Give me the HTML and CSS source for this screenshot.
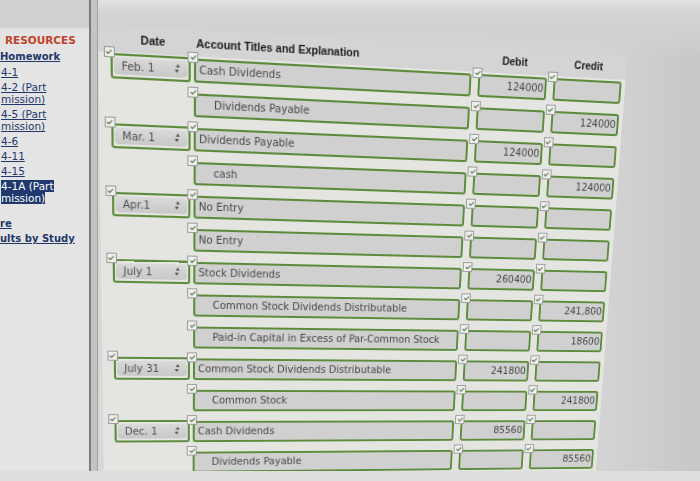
FILE: index.html
```html
<!DOCTYPE html>
<html>
<head>
    <meta charset="UTF-8">
    <meta name="viewport" content="width=device-width, initial-scale=1.0">
    <title>Journal Entries</title>
    <link rel="stylesheet" href="styles.css">
</head>
<body>
    <div class="screen">
        <aside class="sidebar">
            <div class="res-title">RESOURCES</div>
            <a class="hw" href="#">Homework</a>
            <a href="#">4-1</a>
            <a href="#">4-2 (Part<br>mission)</a>
            <a href="#">4-5 (Part<br>mission)</a>
            <a href="#">4-6</a>
            <a href="#">4-11</a>
            <a href="#">4-15</a>
            <a class="current" href="#"><span>4-1A (Part<br>mission)</span></a>
            <a class="hw more" href="#">re</a>
            <a class="hw" href="#">ults by Study</a>
        </aside>
        <div class="divider"></div>

        <main class="sheet">
            <div class="page">
                <div class="head">
                    <div class="h-date">Date</div>
                    <div class="h-acct">Account Titles and Explanation</div>
                    <div class="h-num">Debit</div>
                    <div class="h-num">Credit</div>
                </div>

                <div class="rows">
                    <div class="row">
                        <div class="date"><span class="chk"></span><div class="select">Feb. 1<span class="arr"></span></div></div>
                        <div class="cell"><span class="chk"></span>Cash Dividends</div>
                        <div class="cell num"><span class="chk"></span>124000</div>
                        <div class="cell num"><span class="chk"></span></div>
                    </div>
                    <div class="row">
                        <div></div>
                        <div class="cell indent"><span class="chk"></span>Dividends Payable</div>
                        <div class="cell num"><span class="chk"></span></div>
                        <div class="cell num"><span class="chk"></span>124000</div>
                    </div>
                    <div class="row">
                        <div class="date"><span class="chk"></span><div class="select">Mar. 1<span class="arr"></span></div></div>
                        <div class="cell"><span class="chk"></span>Dividends Payable</div>
                        <div class="cell num"><span class="chk"></span>124000</div>
                        <div class="cell num"><span class="chk"></span></div>
                    </div>
                    <div class="row">
                        <div></div>
                        <div class="cell indent"><span class="chk"></span>cash</div>
                        <div class="cell num"><span class="chk"></span></div>
                        <div class="cell num"><span class="chk"></span>124000</div>
                    </div>
                    <div class="row">
                        <div class="date"><span class="chk"></span><div class="select">Apr.1<span class="arr"></span></div></div>
                        <div class="cell"><span class="chk"></span>No Entry</div>
                        <div class="cell num"><span class="chk"></span></div>
                        <div class="cell num"><span class="chk"></span></div>
                    </div>
                    <div class="row">
                        <div></div>
                        <div class="cell"><span class="chk"></span>No Entry</div>
                        <div class="cell num"><span class="chk"></span></div>
                        <div class="cell num"><span class="chk"></span></div>
                    </div>
                    <div class="row">
                        <div class="date"><span class="chk"></span><div class="select">July 1<span class="arr"></span></div></div>
                        <div class="cell"><span class="chk"></span>Stock Dividends</div>
                        <div class="cell num"><span class="chk"></span>260400</div>
                        <div class="cell num"><span class="chk"></span></div>
                    </div>
                    <div class="row">
                        <div></div>
                        <div class="cell indent"><span class="chk"></span>Common Stock Dividends Distributable</div>
                        <div class="cell num"><span class="chk"></span></div>
                        <div class="cell num"><span class="chk"></span>241,800</div>
                    </div>
                    <div class="row">
                        <div></div>
                        <div class="cell indent"><span class="chk"></span>Paid-in Capital in Excess of Par-Common Stock</div>
                        <div class="cell num"><span class="chk"></span></div>
                        <div class="cell num"><span class="chk"></span>18600</div>
                    </div>
                    <div class="row">
                        <div class="date"><span class="chk"></span><div class="select">July 31<span class="arr"></span></div></div>
                        <div class="cell"><span class="chk"></span>Common Stock Dividends Distributable</div>
                        <div class="cell num"><span class="chk"></span>241800</div>
                        <div class="cell num"><span class="chk"></span></div>
                    </div>
                    <div class="row">
                        <div></div>
                        <div class="cell indent"><span class="chk"></span>Common Stock</div>
                        <div class="cell num"><span class="chk"></span></div>
                        <div class="cell num"><span class="chk"></span>241800</div>
                    </div>
                    <div class="row">
                        <div class="date"><span class="chk"></span><div class="select">Dec. 1<span class="arr"></span></div></div>
                        <div class="cell"><span class="chk"></span>Cash Dividends</div>
                        <div class="cell num"><span class="chk"></span>85560</div>
                        <div class="cell num"><span class="chk"></span></div>
                    </div>
                    <div class="row">
                        <div></div>
                        <div class="cell indent"><span class="chk"></span>Dividends Payable</div>
                        <div class="cell num"><span class="chk"></span></div>
                        <div class="cell num"><span class="chk"></span>85560</div>
                    </div>
                </div>
            </div>
        </main>
    </div>
</body>
</html>
```

FILE: styles.css
```css
body {
    margin: 0;
    background: #dedede;
    font-family: "DejaVu Sans", Verdana, sans-serif;
    overflow: hidden;
}
.screen {
    display: flex;
    height: 471px;
    overflow: hidden;
    background: linear-gradient(to bottom, #e2e2e2 0, #d3d3d3 12px, #d1d1d1 30px, transparent 60px),
                linear-gradient(to right, #d9d9d9 0%, #d4d4d4 85%, #c7c7c7 100%);
}

/* left menu */
.sidebar {
    width: 89px;
    flex-shrink: 0;
    padding-top: 34px;
    background: linear-gradient(to bottom, #d0d0d0 0, #d0d0d0 27px, #e4e4e4 29px);
    font-size: 10.5px;
    line-height: 12px;
    overflow: hidden;
}
.sidebar a {
    display: block;
    color: #22386b;
    margin-bottom: 3px;
    padding-left: 1px;
}
.res-title {
    color: #c2412a;
    font-weight: bold;
    font-size: 10.5px;
    padding-left: 5px;
    margin-bottom: 5px;
}
.sidebar a.hw {
    font-weight: bold;
    font-size: 10px;
    padding-left: 0;
}
.sidebar a.current span {
    background: #1f3a6e;
    color: #fff;
}
.sidebar a.more {
    margin-top: 14px;
    margin-bottom: 3px;
}
.divider {
    width: 6px;
    flex-shrink: 0;
    background: #c4c4c4;
    border-left: 2px solid #7a7a7a;
    border-right: 1px solid #a0a0a0;
}

/* journal table, seen at an angle on the monitor */
.sheet {
    flex: 1;
    transform-origin: 0 0;
    transform: matrix3d(1.115994, 0.069623, 0, 0.00017052,
                        0.014434, 1.137465, 0, 0.00018913,
                        0, 0, 1, 0,
                        -4.9337, -16.824, 0, 1);
}
.page {
    width: 520px;
    margin: 36px 0 0 4px;
    padding-bottom: 40px;
    background: #e4e4e1;
}
.head {
    display: grid;
    grid-template-columns: 88px 278px 77.5px 76.5px;
    height: 24px;
    align-items: center;
    background: #d4d4d4;
    font-family: "Liberation Sans", Arial, sans-serif;
    font-weight: bold;
    font-size: 10.5px;
    color: #1b1b1b;
}
.h-date {
    text-align: center;
    padding-left: 12px;
}
.h-acct {
    padding-left: 2px;
}
.h-num {
    text-align: center;
    padding-right: 4px;
}
.rows {
    padding-top: 2px;
}
.row {
    display: grid;
    grid-template-columns: 88px 278px 77.5px 72.5px;
    height: 32px;
    align-items: start;
}
.cell {
    position: relative;
    height: 18px;
    margin-right: 7px;
    padding: 0 3px;
    border: 2px solid #5d8b3c;
    border-radius: 3px;
    background: #d0d0d0;
    color: #474747;
    font-size: 10px;
    line-height: 18px;
    white-space: nowrap;
}
.cell.indent {
    padding-left: 17px;
}
.cell.num {
    text-align: right;
    padding-right: 1px;
    margin-right: 6.5px;
}
.row > .cell:last-child {
    margin-right: 0;
}
.date {
    position: relative;
    height: 15px;
    margin: -1px 3px 0 10.5px;
    padding: 2px 1.5px;
    border: 2px solid #5d8b3c;
    border-radius: 3px;
}
.select {
    position: relative;
    height: 15px;
    padding-left: 7px;
    border-radius: 4px;
    background: linear-gradient(#d9d9d9, #c8c8c8);
    color: #505050;
    font-size: 10px;
    line-height: 15px;
}
.arr {
    position: absolute;
    right: 7px;
    top: 3px;
    width: 0;
    height: 0;
    border-left: 2.5px solid transparent;
    border-right: 2.5px solid transparent;
    border-bottom: 3px solid #555;
}
.arr::after {
    content: "";
    position: absolute;
    left: -2.5px;
    top: 5px;
    border-left: 2.5px solid transparent;
    border-right: 2.5px solid transparent;
    border-top: 3px solid #555;
}

/* small check badge on each answer box */
.chk {
    position: absolute;
    top: -8px;
    left: -8px;
    width: 8px;
    height: 8px;
    background: #efefef;
    border: 1px solid #9c9c9c;
    z-index: 1;
}
.chk::after {
    content: "";
    position: absolute;
    left: 1.5px;
    top: 1.5px;
    width: 4px;
    height: 2px;
    border-left: 1.5px solid #55733f;
    border-bottom: 1.5px solid #55733f;
    transform: rotate(-45deg);
}
```
